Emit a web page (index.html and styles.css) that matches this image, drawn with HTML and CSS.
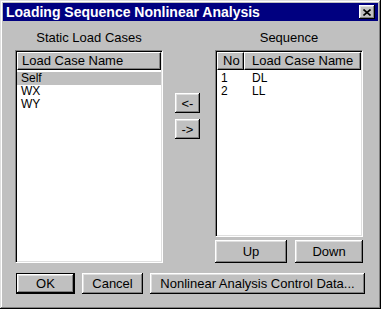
FILE: index.html
```html
<!DOCTYPE html>
<html lang="en">
<head>
    <meta charset="UTF-8">
    <meta name="viewport" content="width=device-width, initial-scale=1.0">
    <title>Loading Sequence Nonlinear Analysis</title>
    <link rel="stylesheet" href="styles.css">
</head>
<body>
    <div class="window">
        <div class="titlebar">
            <span class="title">Loading Sequence Nonlinear Analysis</span>
            <button class="btn close" aria-label="Close">
                <svg width="8" height="7" viewBox="0 0 8 7">
                    <path d="M0.5 0.5 L7.5 6.5 M7.5 0.5 L0.5 6.5" stroke="#000" stroke-width="1.6" fill="none"/>
                </svg>
            </button>
        </div>

        <div class="content">
            <div class="panes">
                <div class="pane">
                    <div class="caption">Static Load Cases</div>
                    <div class="listbox">
                        <div class="list-head">
                            <div class="col-head grow">Load Case Name</div>
                        </div>
                        <div class="rows">
                            <div class="row selected"><span class="cell">Self</span></div>
                            <div class="row"><span class="cell">WX</span></div>
                            <div class="row"><span class="cell">WY</span></div>
                        </div>
                    </div>
                </div>

                <div class="movers">
                    <button class="btn mover">&lt;-</button>
                    <button class="btn mover">-&gt;</button>
                </div>

                <div class="pane">
                    <div class="caption">Sequence</div>
                    <div class="listbox">
                        <div class="list-head">
                            <div class="col-head no">No</div>
                            <div class="col-head grow name">Load Case Name</div>
                        </div>
                        <div class="rows">
                            <div class="row"><span class="cell no">1</span><span class="cell name">DL</span></div>
                            <div class="row"><span class="cell no">2</span><span class="cell name">LL</span></div>
                        </div>
                    </div>
                    <div class="btn-row">
                        <button class="btn up">Up</button>
                        <button class="btn down">Down</button>
                    </div>
                </div>
            </div>

            <div class="actions">
                <button class="btn default ok">OK</button>
                <button class="btn cancel">Cancel</button>
                <button class="btn control">Nonlinear Analysis Control Data...</button>
            </div>
        </div>
    </div>
</body>
</html>
```

FILE: styles.css
```css
body {
    margin: 0;
    background: #c0c0c0;
    font-family: "Liberation Sans", Arial, sans-serif;
    font-size: 13px;
    color: #000;
}

.window {
    width: 381px;
    height: 309px;
    box-sizing: border-box;
    padding: 3px;
    background: #c0c0c0;
    box-shadow: inset -1px -1px #000, inset 1px 1px #dfdfdf,
                inset -2px -2px #808080, inset 2px 2px #fff;
}

.titlebar {
    height: 18px;
    background: #000080;
    color: #fff;
    font-weight: bold;
    font-size: 14px;
    display: flex;
    align-items: center;
    justify-content: space-between;
    padding: 0 3px 0 3px;
}

.btn {
    background: #c0c0c0;
    border: 0;
    padding: 0;
    font: inherit;
    color: #000;
    box-shadow: inset -1px -1px #000, inset 1px 1px #fff,
                inset -2px -2px #808080, inset 2px 2px #dfdfdf;
    display: flex;
    align-items: center;
    justify-content: center;
}

.close {
    width: 16px;
    height: 14px;
}

.content {
    padding: 9px 0 0 12px;
}

.panes {
    display: flex;
    height: 233px;
}

.pane {
    width: 148px;
    display: flex;
    flex-direction: column;
}

.caption {
    height: 16px;
    line-height: 16px;
    text-align: center;
    margin-bottom: 4px;
}

.listbox {
    flex: 1;
    background: #fff;
    border: 1px solid;
    border-color: #808080 #fff #fff #808080;
    box-shadow: inset 1px 1px #000, inset -1px -1px #dfdfdf;
    padding: 1px;
}

.list-head {
    display: flex;
    height: 18px;
}

.col-head {
    box-sizing: border-box;
    height: 18px;
    line-height: 16px;
    background: #c0c0c0;
    border: 1px solid;
    border-color: #fff #000 #000 #fff;
    box-shadow: inset -1px -1px #808080;
    padding-left: 4px;
    white-space: nowrap;
    overflow: hidden;
}

.col-head.grow {
    flex: 1;
}

.col-head.no {
    width: 27px;
    padding-left: 5px;
}

.col-head.name {
    padding-left: 7px;
}

.rows {
    padding-top: 2px;
}

.row {
    display: flex;
    height: 13px;
    line-height: 13px;
    font-size: 12px;
}

.row.selected {
    background: #c0c0c0;
}

.cell {
    padding-left: 4px;
}

.cell.no {
    width: 27px;
    box-sizing: border-box;
}

.cell.name {
    padding-left: 8px;
}

.movers {
    width: 52px;
    display: flex;
    flex-direction: column;
    align-items: flex-start;
    gap: 6px;
    padding-top: 63px;
    padding-left: 12px;
    box-sizing: border-box;
}

.mover {
    width: 25px;
    height: 20px;
}

.btn-row {
    display: flex;
    justify-content: space-between;
    margin-top: 3px;
}

.up {
    width: 72px;
    height: 23px;
}

.down {
    width: 68px;
    height: 23px;
}

.actions {
    display: flex;
    gap: 7px;
    margin-top: 10px;
    padding-left: 1px;
}

.actions .btn {
    height: 21px;
}

.default {
    box-shadow: inset 0 0 0 1px #000, inset -2px -2px #000, inset 2px 2px #fff,
                inset -3px -3px #808080, inset 3px 3px #dfdfdf;
}

.ok {
    width: 59px;
}

.cancel {
    width: 61px;
}

.control {
    width: 215px;
}
```
